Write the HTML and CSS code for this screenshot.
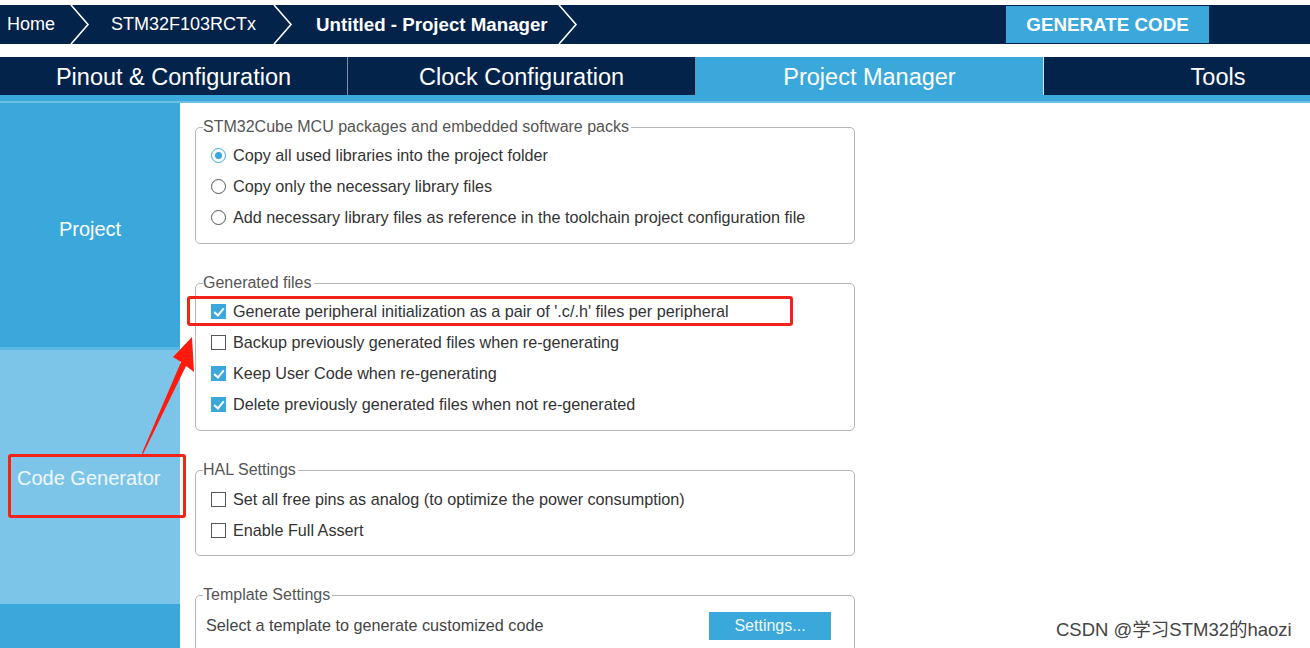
FILE: index.html
```html
<!DOCTYPE html>
<html lang="en">
  <head>
    <meta charset="UTF-8" />
    <title>Untitled - Project Manager</title>
    <link rel="stylesheet" href="styles.css">
  </head>
  <body>
    <div class="topbar">
      <div class="crumbs">
        <span class="crumb crumb-home">Home</span>
        <svg class="chev" width="22" height="39" viewBox="0 0 22 39"><polyline points="2,0 19,19.5 2,39" fill="none" stroke="#fff" stroke-width="1.6"/></svg>
        <span class="crumb crumb-mcu">STM32F103RCTx</span>
        <svg class="chev" width="22" height="39" viewBox="0 0 22 39"><polyline points="2,0 19,19.5 2,39" fill="none" stroke="#fff" stroke-width="1.6"/></svg>
        <span class="crumb crumb-current">Untitled - Project Manager</span>
        <svg class="chev" width="22" height="39" viewBox="0 0 22 39"><polyline points="2,0 19,19.5 2,39" fill="none" stroke="#fff" stroke-width="1.6"/></svg>
      </div>
      <button class="generate">GENERATE CODE</button>
    </div>

    <div class="tabs">
      <div class="tab">Pinout &amp; Configuration</div>
      <div class="tab">Clock Configuration</div>
      <div class="tab active">Project Manager</div>
      <div class="tab">Tools</div>
    </div>
    <div class="tab-strip"></div>

    <div class="main">
      <div class="sidebar">
        <div class="side-item side-project">Project</div>
        <div class="side-item side-codegen">Code Generator</div>
        <div class="side-item side-advanced"></div>
      </div>

      <div class="content">
        <fieldset class="group group-packs">
          <legend>STM32Cube MCU packages and embedded software packs</legend>
          <label class="row"><span class="radio checked"></span>Copy all used libraries into the project folder</label>
          <label class="row"><span class="radio"></span>Copy only the necessary library files</label>
          <label class="row"><span class="radio"></span>Add necessary library files as reference in the toolchain project configuration file</label>
        </fieldset>

        <fieldset class="group group-files">
          <legend>Generated files</legend>
          <label class="row"><span class="check on"></span>Generate peripheral initialization as a pair of '.c/.h' files per peripheral</label>
          <label class="row"><span class="check"></span>Backup previously generated files when re-generating</label>
          <label class="row"><span class="check on"></span>Keep User Code when re-generating</label>
          <label class="row"><span class="check on"></span>Delete previously generated files when not re-generated</label>
        </fieldset>

        <fieldset class="group group-hal">
          <legend>HAL Settings</legend>
          <label class="row"><span class="check"></span>Set all free pins as analog (to optimize the power consumption)</label>
          <label class="row"><span class="check"></span>Enable Full Assert</label>
        </fieldset>

        <fieldset class="group group-template">
          <legend>Template Settings</legend>
          <div class="row template-row">
            <span>Select a template to generate customized code</span>
            <button class="settings">Settings...</button>
          </div>
        </fieldset>
      </div>
    </div>

    <!-- annotations drawn over the screenshot -->
    <div class="mark mark-line"></div>
    <div class="mark mark-side"></div>
    <svg class="arrow" width="80" height="130" viewBox="0 0 80 130">
      <polygon points="52,5 54,40 46,34 3,122 2,121 41,30 33,25" fill="#ff1a0e"/>
    </svg>

    <div class="watermark">CSDN @学习STM32的haozi</div>
  </body>
</html>
```

FILE: styles.css
```css
body {
  margin: 0;
  width: 1310px;
  height: 648px;
  overflow: hidden;
  position: relative;
  background: #fff;
  font-family: "Liberation Sans", Arial, sans-serif;
}

/* breadcrumb bar */
.topbar {
  margin-top: 5px;
  height: 39px;
  background: #03234b;
  display: flex;
  align-items: center;
}

.crumbs {
  display: flex;
  align-items: center;
  height: 39px;
  flex: 1;
}

.crumb {
  color: #fff;
  font-size: 18px;
}

.crumb-home { margin-left: 7px; margin-right: 14px; }
.crumb-mcu { margin-left: 20px; margin-right: 16px; }
.crumb-current { margin-left: 22px; margin-right: 9px; font-weight: bold; font-size: 18.7px; }

.chev { display: block; }

.generate {
  width: 203px;
  height: 37px;
  margin-right: 101px;
  border: none;
  background: #3aa8db;
  color: #fff;
  font-family: "Liberation Sans", Arial, sans-serif;
  font-size: 18.8px;
  font-weight: bold;
}

/* main tabs */
.tabs {
  margin-top: 13px;
  height: 38px;
  display: flex;
  background: #03234b;
  overflow: hidden;
}

.tab {
  width: 348px;
  flex: none;
  color: #fff;
  font-size: 23.5px;
  display: flex;
  align-items: center;
  justify-content: center;
  padding-top: 2px;
  border-right: 1px solid #7f90a8;
  box-sizing: border-box;
}

.tab:last-child {
  border-right: none;
}

.tab.active {
  background: #3aa8db;
  border-right-color: #cfe6f3;
}

.tab-strip {
  height: 6px;
  background: #3aa8db;
  border-bottom: 2px solid #6cc0e6;
}

/* body */
.main {
  display: flex;
  height: 547px;
}

.sidebar {
  width: 180px;
  display: flex;
  flex-direction: column;
}

.side-item {
  color: #fff;
  font-size: 20px;
  display: flex;
  align-items: center;
}

.side-project {
  height: 247px;
  background: #3aa8db;
  justify-content: center;
  padding-top: 8px;
  border-bottom: 3px solid #5bb8e3;
  box-sizing: border-box;
}

.side-codegen {
  height: 254px;
  background: #7dc5e8;
  color: #eef8fd;
  padding-left: 17px;
  padding-top: 2px;
  box-sizing: border-box;
}

.side-advanced {
  flex: 1;
  background: #3aa8db;
}

.content {
  flex: 1;
  padding: 15px 0 0 15px;
}

.group {
  width: 660px;
  box-sizing: border-box;
  margin: 0 0 30px;
  padding: 4px 0 10px 15px;
  border: 1px solid #b4b6b9;
  border-radius: 5px;
}

.group legend {
  color: #555;
  font-size: 16px;
  padding: 0 2px 0 0;
  margin-left: -8px;
}

.group-hal {
  padding-top: 5px;
  padding-bottom: 9px;
}

.row {
  display: flex;
  align-items: center;
  height: 31px;
  color: #333;
  font-size: 16.2px;
}

.radio {
  width: 15px;
  height: 15px;
  border: 1px solid #555;
  border-radius: 50%;
  margin-right: 7px;
  box-sizing: border-box;
  flex: none;
  position: relative;
}

.radio.checked {
  border-color: #3aa8db;
}

.radio.checked::after {
  content: "";
  position: absolute;
  left: 3px;
  top: 3px;
  width: 7px;
  height: 7px;
  border-radius: 50%;
  background: #3aa8db;
}

.check {
  width: 15px;
  height: 15px;
  border: 1px solid #555;
  margin-right: 7px;
  box-sizing: border-box;
  flex: none;
  position: relative;
}

.check.on {
  background: #3aa8db;
  border-color: #3aa8db;
}

.check.on::after {
  content: "";
  position: absolute;
  left: 4px;
  top: 1px;
  width: 4px;
  height: 8px;
  border: solid #fff;
  border-width: 0 2px 2px 0;
  transform: rotate(40deg);
}

.group-template {
  padding-left: 10px;
  padding-top: 6px;
}

.group-template legend {
  margin-left: -3px;
}

.template-row {
  justify-content: space-between;
  padding-right: 23px;
  color: #444;
}

.settings {
  width: 122px;
  height: 28px;
  border: none;
  background: #3aa8db;
  color: #eef8fd;
  font-family: "Liberation Sans", Arial, sans-serif;
  font-size: 16px;
}

/* red annotation marks */
.mark {
  position: absolute;
  border: 3px solid #f2231b;
  border-radius: 3px;
  box-sizing: border-box;
}

.mark-line {
  left: 187px;
  top: 296px;
  width: 606px;
  height: 30px;
}

.mark-side {
  left: 8px;
  top: 454px;
  width: 178px;
  height: 64px;
}

.arrow {
  position: absolute;
  left: 140px;
  top: 332px;
}

.watermark {
  position: absolute;
  left: 1056px;
  top: 615px;
  color: #444;
  font-size: 18.5px;
  font-family: "Liberation Sans", "Noto Sans CJK SC", sans-serif;
  text-shadow: 0 0 2px #fff, 0 0 2px #fff;
}
```
